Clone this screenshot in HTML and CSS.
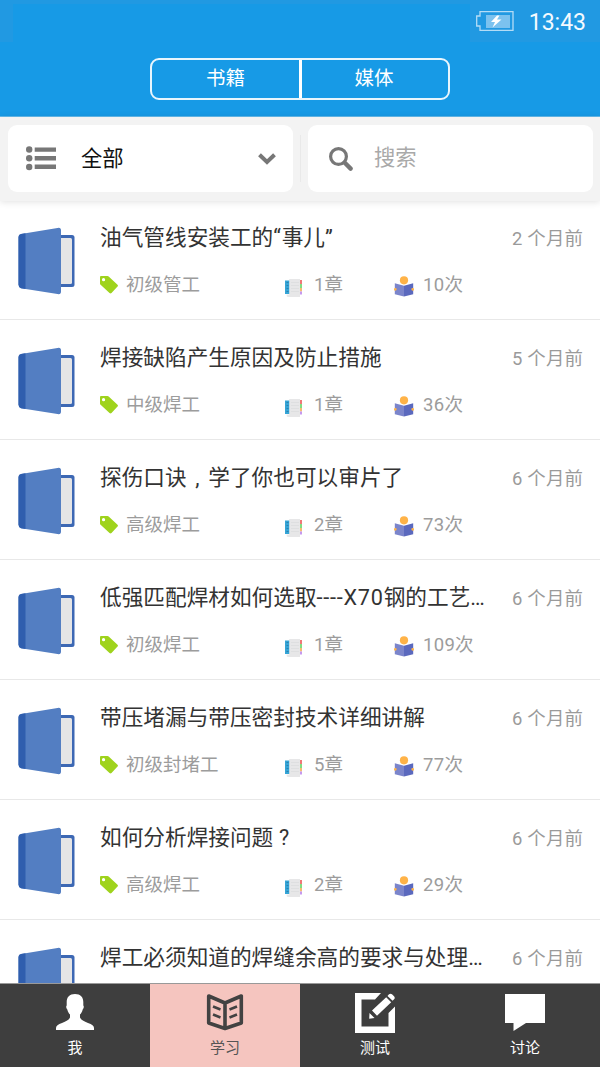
FILE: index.html
```html
<!DOCTYPE html>
<html lang="zh-CN">
<head>
<meta charset="utf-8">
<title>学习</title>
<link rel="stylesheet" href="styles.css">
</head>
<body>
<svg class="sprite" aria-hidden="true">
  <symbol id="book" viewBox="0 0 57 68">
    <path d="M40 8h14q2.500 0 2.500 2.500v47q0 2.500-2.500 2.500H40z" fill="#3d68b4"/>
    <path d="M42 11h10.500q1.500 0 1.500 1.500v43q0 1.500-1.500 1.500H42z" fill="#e5e5e6"/>
    <path d="M3 7 39.500 1Q43 .2 43 3.500v61Q43 67.700 39.500 67L3 61.200Q.5 60.500.5 57.500V10Q.5 7.500 3 7z" fill="#537ec2"/>
    <path d="M7.500 6.300 3 7Q.5 7.500.5 10v47.500q0 3 2.500 3.700l4.500.7z" fill="#2f5eae"/>
  </symbol>
  <symbol id="tag" viewBox="0 0 18 18">
    <path fill-rule="evenodd" d="M1 0h6.500q.7 0 1.200.5l8.800 8.300q.9.900 0 1.800L11.500 17q-1 .9-2 0L.6 8.800Q0 8.200 0 7.500V1Q0 0 1 0zm2.500 2a1.600 1.600 0 1 0 .1 3.200 1.600 1.600 0 0 0-.1-3.200z" fill="#9fd31d"/>
  </symbol>
  <symbol id="notebook" viewBox="0 0 18 20">
    <path d="M0 2.500h5V16H0z" fill="#35a5d6"/>
    <path d="M14 2h3v4h-3z" fill="#f07878"/><path d="M14 6h3v4h-3z" fill="#83dc83"/><path d="M14 10h3v3.500h-3z" fill="#f4bd72"/><path d="M14 13.500h3v3h-3z" fill="#c599ef"/>
    <path d="M4.200 1H15v18H3q-1.500 0-1.500-2.500h2.700z" fill="#e7e7e8"/>
    <path d="M6 4.500h8M6 7.500h8M6 10.500h8M6 13.500h8" stroke="#dadbdc" stroke-width=".7"/>
    <path d="M1.500 4.500h2M1.500 7.500h2M1.500 10.500h2M1.500 13.500h2" stroke="#2878a8" stroke-width=".8"/>
  </symbol>
  <symbol id="reader" viewBox="0 0 20 21">
    <circle cx="10" cy="4.300" r="4.100" fill="#ffb348"/>
    <path d="M.8 7.300 10 9.800v10.700L.8 18.300z" fill="#7b85cb"/>
    <path d="M19.200 7.300 10 9.800v10.700l9.200-2.200z" fill="#5b69be"/>
    <circle cx="1.300" cy="13.300" r="1.400" fill="#ffb348"/><circle cx="18.700" cy="13.300" r="1.400" fill="#ffb348"/>
  </symbol>
</svg>
<div class="app">
  <header class="header">
    <div class="status">
      <div class="status-left"></div>
      <div class="status-right">
        <svg class="battery" viewBox="0 0 38 20"><path d="M4 .7h33v18.600H4v-4.300H.7V5H4z" fill="none" stroke="#b4dcf6" stroke-width="1.300"/><path d="M10 4h24v13H10z" fill="#7cc2ef"/><path d="m21 4.500-6 6.500h4l-2.500 5.500 9-8h-4.500l2.500-4z" fill="#fff"/></svg>
        <span class="clock">13:43</span>
      </div>
    </div>
    <div class="tabs"><span class="tab">书籍</span><span class="tab">媒体</span></div>
  </header>
  <div class="filters">
    <div class="box">
      <svg class="list-icon" viewBox="0 0 30 25" fill="#777"><circle cx="3.200" cy="3.500" r="3.200"/><circle cx="3.200" cy="12.300" r="3.200"/><circle cx="3.200" cy="21" r="3.200"/><path d="M8.700 1.400H30v4.400H8.700zm0 8.600H30v4.400H8.700zm0 8.600H30V23H8.700z"/></svg>
      <span class="all">全部</span>
      <svg class="chevron" viewBox="0 0 18 12"><path d="M1.500 1.800 9 9l7.500-7.200" fill="none" stroke="#777" stroke-width="4"/></svg>
    </div>
    <div class="split"></div>
    <div class="box">
      <svg class="search-icon" viewBox="0 0 24 24" fill="none" stroke="#777"><circle cx="9.500" cy="9.500" r="7.900" stroke-width="3.200"/><path d="m15.800 15.800 5.800 5.800" stroke-width="4.400" stroke-linecap="round"/></svg>
      <span class="placeholder">搜索</span>
    </div>
  </div>
  <main class="list">
    <article class="row"><svg class="book"><use href="#book"/></svg><div class="info"><div class="top"><h2>油气管线安装工的<span class="latin">“</span>事儿<span class="latin">”</span></h2><time>2 个月前</time></div><div class="meta"><span><svg class="tag"><use href="#tag"/></svg>初级管工</span><span><svg class="notebook"><use href="#notebook"/></svg>1章</span><span><svg class="reader"><use href="#reader"/></svg>10次</span></div></div></article>
    <article class="row"><svg class="book"><use href="#book"/></svg><div class="info"><div class="top"><h2>焊接缺陷产生原因及防止措施</h2><time>5 个月前</time></div><div class="meta"><span><svg class="tag"><use href="#tag"/></svg>中级焊工</span><span><svg class="notebook"><use href="#notebook"/></svg>1章</span><span><svg class="reader"><use href="#reader"/></svg>36次</span></div></div></article>
    <article class="row"><svg class="book"><use href="#book"/></svg><div class="info"><div class="top"><h2>探伤口诀<span class="mark">,</span>学了你也可以审片了</h2><time>6 个月前</time></div><div class="meta"><span><svg class="tag"><use href="#tag"/></svg>高级焊工</span><span><svg class="notebook"><use href="#notebook"/></svg>2章</span><span><svg class="reader"><use href="#reader"/></svg>73次</span></div></div></article>
    <article class="row"><svg class="book"><use href="#book"/></svg><div class="info"><div class="top"><h2>低强匹配焊材如何选取<span class="latin">----X70</span>钢的工艺<span class="latin">…</span></h2><time>6 个月前</time></div><div class="meta"><span><svg class="tag"><use href="#tag"/></svg>初级焊工</span><span><svg class="notebook"><use href="#notebook"/></svg>1章</span><span><svg class="reader"><use href="#reader"/></svg>109次</span></div></div></article>
    <article class="row"><svg class="book"><use href="#book"/></svg><div class="info"><div class="top"><h2>带压堵漏与带压密封技术详细讲解</h2><time>6 个月前</time></div><div class="meta"><span><svg class="tag"><use href="#tag"/></svg>初级封堵工</span><span><svg class="notebook"><use href="#notebook"/></svg>5章</span><span><svg class="reader"><use href="#reader"/></svg>77次</span></div></div></article>
    <article class="row"><svg class="book"><use href="#book"/></svg><div class="info"><div class="top"><h2>如何分析焊接问题<span class="mark">?</span></h2><time>6 个月前</time></div><div class="meta"><span><svg class="tag"><use href="#tag"/></svg>高级焊工</span><span><svg class="notebook"><use href="#notebook"/></svg>2章</span><span><svg class="reader"><use href="#reader"/></svg>29次</span></div></div></article>
    <article class="row"><svg class="book"><use href="#book"/></svg><div class="info"><div class="top"><h2>焊工必须知道的焊缝余高的要求与处理<span class="latin">…</span></h2><time>6 个月前</time></div></div></article>
  </main>
  <nav class="nav">
    <a class="item"><svg viewBox="0 0 40 40" fill="#fff"><path d="M20 1c5.500 0 8.300 3 8.300 8v3.500c.8.500.6 3-.6 4-.6 2.500-1.600 4-2.700 5v3c1 2.500 4 3.800 8 5.500 4 1.600 6 2.500 6 5V37H1v-2c0-2.500 2-3.400 6-5 4-1.700 7-3 8-5.500v-3c-1.100-1-2.100-2.500-2.700-5-1.200-1-1.400-3.500-.6-4V9c0-5 2.800-8 8.300-8z"/></svg><span>我</span></a>
    <a class="item active"><svg viewBox="0 0 40 40" fill="none" stroke="#424242"><path d="m3.700 3 16.300 7 16.300-7v27L20 35.500 3.700 30zM20 10v25" stroke-width="3.600" stroke-linejoin="round"/><path d="m8 13.500 7.500 3M8 21.500l7.500 3M32 13.500l-7.500 3M32 21.500l-7.500 3" stroke-width="2.600"/></svg><span>学习</span></a>
    <a class="item"><svg viewBox="0 0 40 40" fill="#fff"><path d="M0 0h26l-6 6.500H6.500v27h27V20l6.500-6.500V40H0z"/><path d="M17 17.500 31.200 4.200l5 5L22 22.800zM32.500 3 34 1.300q1.500-1.300 3 0l2 2q1.300 1.500.3 2.700l-1.700 1.800zM14.500 20l5 5-5.300.7z"/></svg><span>测试</span></a>
    <a class="item"><svg viewBox="0 0 40 40" fill="#fff"><path d="M0 1h40v29H21L8.500 38v-8H0z"/></svg><span>讨论</span></a>
  </nav>
</div>
</body>
</html>
```
FILE: styles.css
```css
* { box-sizing: border-box; }
body { margin: 0; font-family: Roboto, "Noto Sans CJK SC", sans-serif; background: #fff; }
.sprite { display: none; }
svg { display: block; flex: none; }
.app { height: 1067px; display: flex; flex-direction: column; overflow: hidden; }
.header { flex: none; height: 117px; background: #179ae6; border-bottom: 1px solid #62baec; display: flex; flex-direction: column; align-items: center; }
.status { width: 100%; height: 42px; display: flex; justify-content: space-between; border-top: 4px solid #2199e2; flex: none; }
.status-left { width: 13px; background: #2199e2; }
.status-right { width: 130px; background: #2199e2; display: flex; align-items: center; padding: 0 14px 4px 6px; justify-content: space-between; }
.battery { width: 38px; height: 20px; }
.clock { color: #f4faff; font-size: 23px; line-height: 30px; padding-top: 3px; }
.tabs { margin-top: 16px; width: 300px; height: 42px; border: 2px solid #e8f5fd; border-radius: 9px; display: grid; grid-template-columns: 147px 149px; }
.tab { color: #fff; font-size: 19.500px; line-height: 37px; text-align: center; }
.tab + .tab { border-left: 3px solid #fff; padding-right: 2px; }
.filters { flex: none; height: 84px; background: #f3f3f3; display: flex; padding: 8px 7px 9px 8px; box-shadow: 0 1px 7px rgba(0,0,0,.12); position: relative; }
.box { width: 285px; height: 67px; background: #fff; border-radius: 9px; display: flex; align-items: center; }
.split { width: 1px; height: 47px; margin: 10px 7px 0; background: #e9e9e9; }
.list-icon { width: 30px; height: 25px; margin-left: 18px; }
.all { font-size: 21.300px; color: #111; margin-left: 25px; padding-bottom: 4px; }
.chevron { width: 18px; height: 12px; margin-left: auto; margin-right: 17px; }
.search-icon { width: 24px; height: 24px; margin-left: 21px; }
.placeholder { font-size: 21.300px; color: #a9a9a9; margin-left: 21px; padding-bottom: 6px; }
.list { flex: 1; min-height: 0; overflow: hidden; margin-top: -1px; }
.row { height: 120px; border-bottom: 1px solid #e8e8e8; display: flex; padding: 27px 17px 0 18px; }
.book { width: 57px; height: 68px; margin-right: 25px; }
.info { flex: 1; min-width: 0; }
.top { display: flex; justify-content: space-between; margin-top: -6px; height: 34px; }
h2 { margin: 0; font-size: 21.670px; line-height: 34px; font-weight: 400; color: #333; white-space: nowrap; }
.latin { letter-spacing: .75px; }
.mark { display: inline-block; width: 1em; text-align: center; }
time { font-size: 18.400px; line-height: 36px; letter-spacing: .25px; margin-right: -.25px; color: #9a9a9a; white-space: nowrap; }
.meta { display: grid; grid-template-columns: 185px 109px 1fr; margin-top: 15px; height: 30px; font-size: 18.500px; line-height: 30px; color: #9c9c9c; }
.meta > span { display: flex; align-items: center; white-space: nowrap; }
.meta > span:last-child { letter-spacing: .3px; }
.tag { width: 18px; height: 18px; margin-right: 8px; }
.notebook { width: 18px; height: 20px; margin: 5px 11px 0 0; }
.reader { width: 20px; height: 21px; margin: 3px 9px 0 0; }
.nav { flex: none; height: 84px; background: #3e3e3e; display: grid; grid-template-columns: repeat(4, 1fr); border-top: 1px solid #999; }
.item { display: flex; flex-direction: column; align-items: center; padding-top: 9px; color: #fff; font-size: 15px; line-height: 24px; }
.item svg { width: 40px; height: 40px; margin-bottom: 3px; }
.active { background: #f5c5bf; color: #555; }
```
